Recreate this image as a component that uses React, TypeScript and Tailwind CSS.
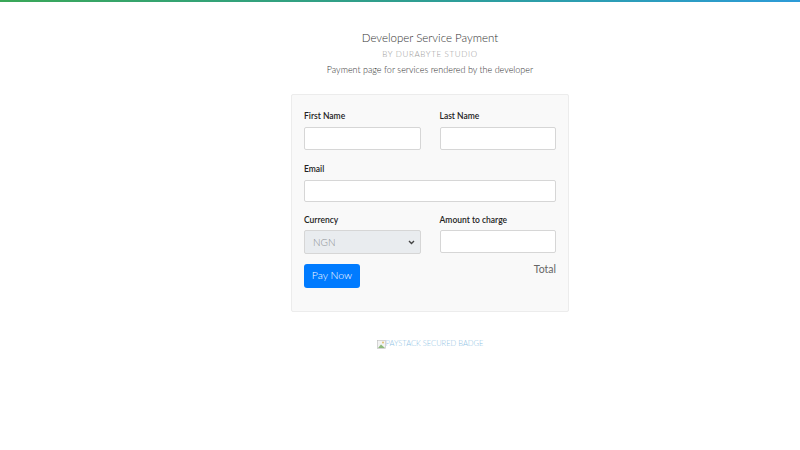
import React from "react";

export default function App() {
  const font = { fontFamily: "Lato, 'Open Sans', sans-serif" } as React.CSSProperties;
  return (
    <div className="w-[800px] h-[450px] bg-white relative overflow-hidden" style={font}>
      <div className="h-[2px] w-full bg-gradient-to-r from-[#3aa757] via-[#2f9e8f] to-[#2d9bd8]" />
      <div className="ml-[291px] w-[278px] flex flex-col items-center">
        <div className="mt-[28px] text-[11.5px] leading-[15px] font-light text-[#333]">Developer Service Payment</div>
        <div className="mt-[4px] text-[8px] leading-[10px] tracking-[0.08em] font-light text-[#999]">BY DURABYTE STUDIO</div>
        <div className="mt-[5px] text-[9px] leading-[12px] font-light text-[#333]">Payment page for services rendered by the developer</div>

        <div className="mt-[18px] w-[278px] h-[218px] bg-[#f9f9f9] border border-[#ececec] rounded-[2px] px-[12px] pt-[15px]">
          <div className="flex gap-[19px]">
            <div className="w-[117px] flex flex-col">
              <label className="text-[8.5px] leading-[12px] font-semibold text-[#222]">First Name</label>
              <input className="mt-[5px] h-[23px] w-full bg-white border border-[#d6d6d6] rounded-[2px] outline-none" />
            </div>
            <div className="w-[117px] flex flex-col">
              <label className="text-[8.5px] leading-[12px] font-semibold text-[#222]">Last Name</label>
              <input className="mt-[5px] h-[23px] w-full bg-white border border-[#d6d6d6] rounded-[2px] outline-none" />
            </div>
          </div>
          <div className="mt-[13px] flex flex-col">
            <label className="text-[8.5px] leading-[12px] font-semibold text-[#222]">Email</label>
            <input className="mt-[5px] h-[22px] w-[252px] bg-white border border-[#d6d6d6] rounded-[2px] outline-none" />
          </div>
          <div className="mt-[12px] flex gap-[19px]">
            <div className="w-[117px] flex flex-col">
              <label className="text-[8.5px] leading-[12px] font-semibold text-[#222]">Currency</label>
              <div className="mt-[4px] h-[24px] w-full bg-[#e9ecef] border border-[#d6d6d6] rounded-[2px] flex items-center justify-between pl-[8px] pr-[5px]">
                <span className="text-[10px] text-[#8a8f94] font-light">NGN</span>
                <svg width="7" height="5" viewBox="0 0 7 5"><path d="M1 1 L3.5 3.5 L6 1" stroke="#444" strokeWidth="1.4" fill="none" /></svg>
              </div>
            </div>
            <div className="w-[117px] flex flex-col">
              <label className="text-[8.5px] leading-[12px] font-semibold text-[#222]">Amount to charge</label>
              <input className="mt-[4px] h-[23px] w-full bg-white border border-[#d6d6d6] rounded-[2px] outline-none" />
            </div>
          </div>
          <div className="mt-[10px] flex justify-between items-start">
            <button className="w-[56px] h-[24px] bg-[#007bff] rounded-[3px] text-white text-[10.5px] font-light">Pay Now</button>
            <span className="mt-[-2px] text-[10.5px] text-[#666] font-normal">Total</span>
          </div>
        </div>

        <div className="mt-[27px] flex items-center">
          <svg width="9" height="9" viewBox="0 0 9 9"><rect x="0.5" y="0.5" width="8" height="8" fill="#f3f3f3" stroke="#bbb" strokeWidth="0.6" /><path d="M1 8 L4 4.5 L8 8 Z" fill="#8cb87a" /><circle cx="6" cy="2.5" r="1" fill="#e0c070" /></svg>
          <span className="text-[7.5px] leading-[10px] text-[#8ec2e4] font-light">PAYSTACK SECURED BADGE</span>
        </div>
      </div>
    </div>
  );
}
